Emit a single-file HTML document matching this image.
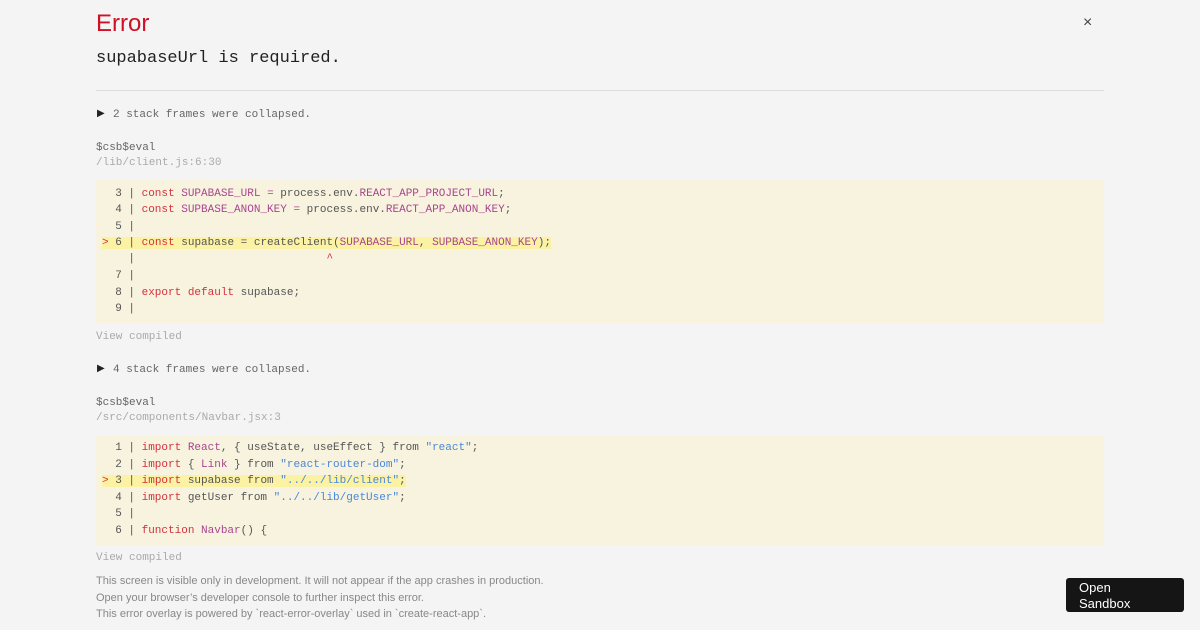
<!DOCTYPE html>
<html><head><meta charset="utf-8"><style>
body{margin:0;width:1200px;height:630px;background:#f4f4f4;position:relative;overflow:hidden;font-family:"Liberation Sans",sans-serif}
.a{position:absolute;white-space:pre}
.m{font-family:"Liberation Mono",monospace}
.c{font-family:"Liberation Mono",monospace;font-size:11px;line-height:16px;color:#555;left:102px;white-space:pre;position:absolute}
.k{color:#d6303c}.p{color:#a8468f}.b{color:#4a87d8}
.hl{background:#fbf2a4}
.blk{position:absolute;left:96px;width:1008px;background:#f7f3df}
.g{color:#999;font-size:11px}
</style></head><body>
<div class="a" style="left:96px;top:10px;font-size:24px;color:#ce1126;line-height:28px">Error</div>
<div class="a" style="left:1083px;top:14px;font-size:16px;color:#444;line-height:18px">×</div>
<div class="a m" style="left:96px;top:49px;font-size:17px;color:#222;line-height:20px">supabaseUrl is required.</div>
<div class="a" style="left:96px;top:90px;width:1008px;height:1px;background:#ddd"></div>

<div class="a" style="left:97px;top:108px;font-size:10px;color:#222;line-height:12px">▶</div>
<div class="a m" style="left:113px;top:107px;font-size:11px;color:#666;line-height:16px">2 stack frames were collapsed.</div>
<div class="a m" style="left:96px;top:140px;font-size:11px;color:#666;line-height:16px">$csb$eval</div>
<div class="a m" style="left:96px;top:155px;font-size:11px;color:#aaa;line-height:16px">/lib/client.js:6:30</div>

<div class="blk" style="top:180px;height:143px"></div>
<div class="c" style="top:186px">  3 | <span class="k">const</span> <span class="p">SUPABASE_URL</span> <span class="p">=</span> process.env.<span class="p">REACT_APP_PROJECT_URL</span>;</div>
<div class="c" style="top:202px">  4 | <span class="k">const</span> <span class="p">SUPBASE_ANON_KEY</span> <span class="p">=</span> process.env.<span class="p">REACT_APP_ANON_KEY</span>;</div>
<div class="c" style="top:219px">  5 |</div>
<div class="c" style="top:235px"><span class="hl"><span class="k">&gt;</span> 6 | <span class="k">const</span> supabase = createClient(<span class="p">SUPABASE_URL</span>, <span class="p">SUPBASE_ANON_KEY</span>);</span></div>
<div class="c" style="top:251px">    |                             <span class="k">^</span></div>
<div class="c" style="top:268px">  7 |</div>
<div class="c" style="top:285px">  8 | <span class="k">export</span> <span class="k">default</span> supabase;</div>
<div class="c" style="top:301px">  9 |</div>
<div class="a m g" style="left:96px;top:329px;line-height:16px;color:#aaa">View compiled</div>

<div class="a" style="left:97px;top:363px;font-size:10px;color:#222;line-height:12px">▶</div>
<div class="a m" style="left:113px;top:362px;font-size:11px;color:#666;line-height:16px">4 stack frames were collapsed.</div>
<div class="a m" style="left:96px;top:395px;font-size:11px;color:#666;line-height:16px">$csb$eval</div>
<div class="a m" style="left:96px;top:410px;font-size:11px;color:#aaa;line-height:16px">/src/components/Navbar.jsx:3</div>

<div class="blk" style="top:436px;height:109px"></div>
<div class="c" style="top:440px">  1 | <span class="k">import</span> <span class="p">React</span>, { useState, useEffect } from <span class="b">"react"</span>;</div>
<div class="c" style="top:457px">  2 | <span class="k">import</span> { <span class="p">Link</span> } from <span class="b">"react-router-dom"</span>;</div>
<div class="c" style="top:473px"><span class="hl"><span class="k">&gt;</span> 3 | <span class="k">import</span> supabase from <span class="b">"../../lib/client"</span>;</span></div>
<div class="c" style="top:490px">  4 | <span class="k">import</span> getUser from <span class="b">"../../lib/getUser"</span>;</div>
<div class="c" style="top:506px">  5 |</div>
<div class="c" style="top:523px">  6 | <span class="k">function</span> <span class="p">Navbar</span>() {</div>
<div class="a m g" style="left:96px;top:550px;line-height:16px;color:#aaa">View compiled</div>

<div class="a" style="left:96px;top:573px;font-size:11px;color:#888;line-height:16.5px">This screen is visible only in development. It will not appear if the app crashes in production.<br>Open your browser’s developer console to further inspect this error.<br>This error overlay is powered by `react-error-overlay` used in `create-react-app`.</div>

<div class="a" style="left:1066px;top:578px;width:118px;height:34px;background:#151515;border-radius:3px"></div>
<div class="a" style="left:1079px;top:580px;font-size:13px;color:#fff;line-height:16px">Open<br>Sandbox</div>
</body></html>
